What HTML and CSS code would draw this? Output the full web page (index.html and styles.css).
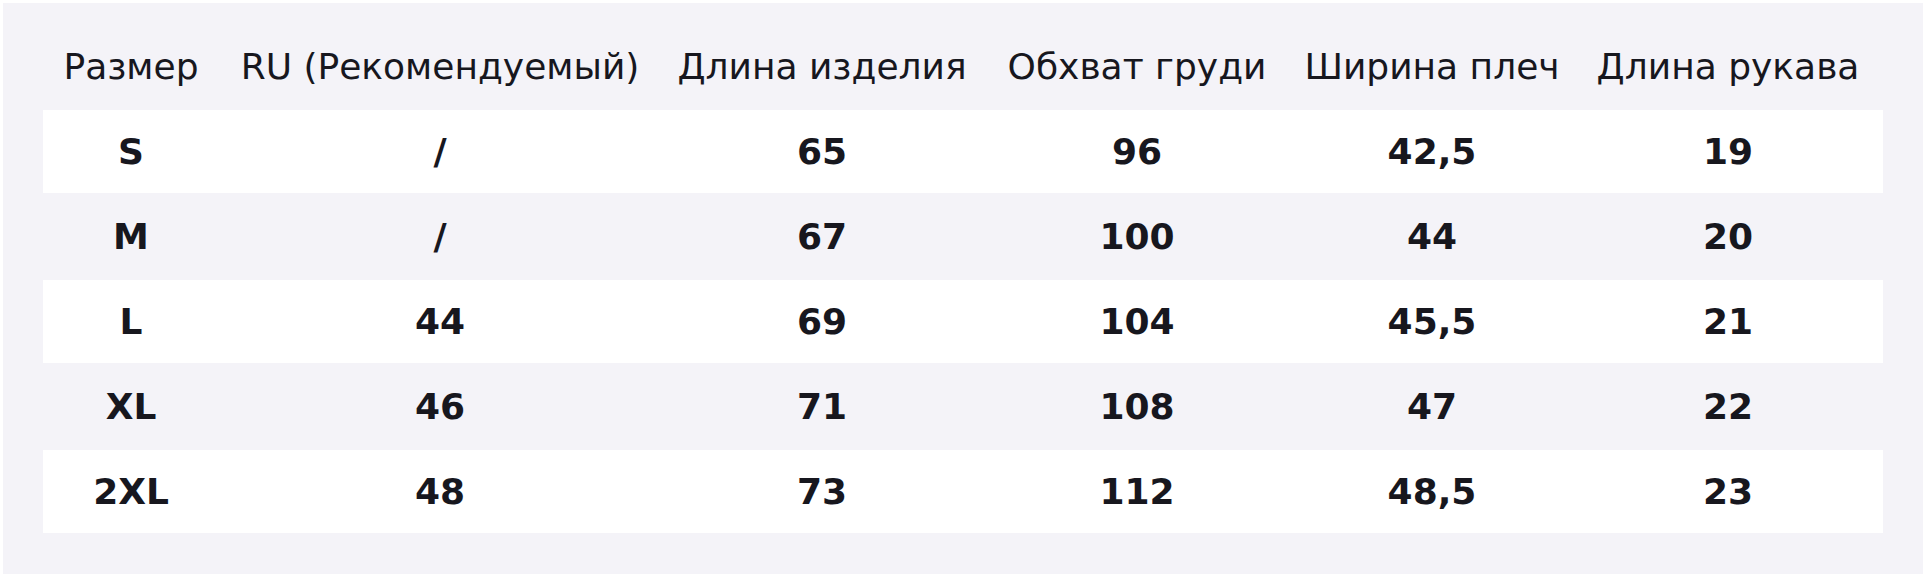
FILE: index.html
```html
<!DOCTYPE html>
<html lang="ru">
<head>
<meta charset="utf-8">
<title>Таблица размеров</title>
<link rel="stylesheet" href="styles.css">
</head>
<body>
<div class="sheet">
  <table class="sizes">
    <colgroup>
      <col class="c1"><col class="c2"><col class="c3"><col class="c4"><col class="c5"><col class="c6">
    </colgroup>
    <thead>
      <tr class="head">
        <th>Размер</th>
        <th>RU (Рекомендуемый)</th>
        <th>Длина изделия</th>
        <th>Обхват груди</th>
        <th>Ширина плеч</th>
        <th>Длина рукава</th>
      </tr>
    </thead>
    <tbody>
      <tr class="odd"><td>S</td><td>/</td><td>65</td><td>96</td><td>42,5</td><td>19</td></tr>
      <tr class="even"><td>M</td><td>/</td><td>67</td><td>100</td><td>44</td><td>20</td></tr>
      <tr class="odd"><td>L</td><td>44</td><td>69</td><td>104</td><td>45,5</td><td>21</td></tr>
      <tr class="even"><td>XL</td><td>46</td><td>71</td><td>108</td><td>47</td><td>22</td></tr>
      <tr class="odd"><td>2XL</td><td>48</td><td>73</td><td>112</td><td>48,5</td><td>23</td></tr>
    </tbody>
  </table>
</div>
</body>
</html>
```
FILE: styles.css
```css
html, body {
  margin: 0;
  padding: 0;
  background: #ffffff;
}
body {
  padding: 3px;
  font-family: "DejaVu Sans", "Noto Sans", sans-serif;
  color: #17171e;
}
.sheet {
  background: #f4f3f8;
  height: 571px;
  box-sizing: border-box;
  padding: 20px 40px 39px;
}
.sizes {
  width: 1840px;
  border-collapse: separate;
  border-spacing: 0 2px;
  table-layout: fixed;
}
.c1 { width: 176px; }
.c2 { width: 442px; }
.c3 { width: 322px; }
.c4 { width: 308px; }
.c5 { width: 282px; }
.c6 { width: 310px; }
.sizes th,
.sizes td {
  height: 83px;
  padding: 0;
  text-align: center;
  vertical-align: middle;
  white-space: nowrap;
  font-size: 36px;
  line-height: 1;
}
.sizes th {
  font-weight: normal;
}
.sizes td {
  font-weight: bold;
}
.odd td {
  background: #ffffff;
}
.even td {
  background: transparent;
}
```
